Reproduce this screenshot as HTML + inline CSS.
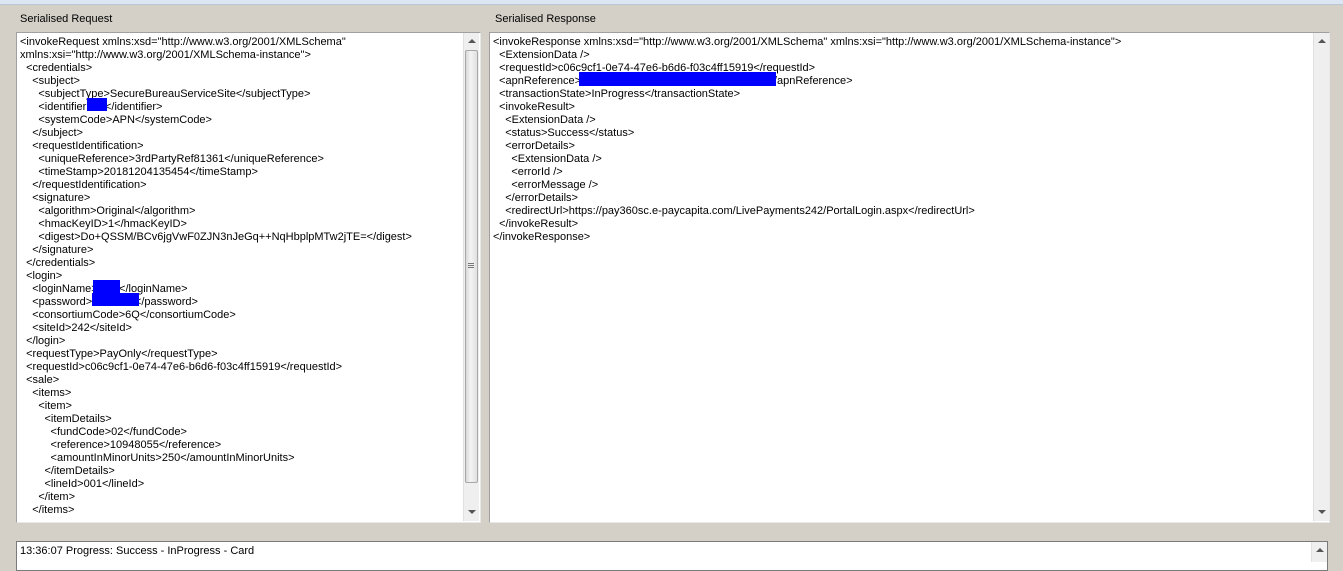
<!DOCTYPE html>
<html><head><meta charset="utf-8"><style>
*{margin:0;padding:0;box-sizing:border-box}
body{width:1343px;height:560px;background:#d4d0c8;position:relative;overflow:hidden;font-family:"Liberation Sans",Tahoma,sans-serif;font-size:11px;color:#000}
.top{position:absolute;left:0;top:0;width:1343px;height:5px;background:#dce7f3;border-bottom:1px solid #b9c6d6}
.lbl{position:absolute;top:13px;font-size:11px}
.box{position:absolute;background:#fff;border:1px solid #a0a0a0;border-right-color:#e8e8e8;border-bottom-color:#e8e8e8}
.txt{position:absolute;white-space:pre;line-height:13px;letter-spacing:0}
.sb{position:absolute;background:#efefef;border-left:1px solid #e0e0e0}
.thumb{position:absolute;left:1px;right:1px;background:linear-gradient(90deg,#d8d8d8,#f4f4f4 40%,#e0e0e0);border:1px solid #a8a8a8;border-radius:2px}
.up,.dn{position:absolute;left:4px;width:0;height:0;border-left:4px solid transparent;border-right:4px solid transparent}
.up{border-bottom:4px solid #555}
.dn{border-top:4px solid #555}
.red{position:absolute;background:#0000ff}
</style></head><body>
<div class="top"></div>
<div class="lbl" style="left:20px">Serialised Request</div>
<div class="lbl" style="left:495px">Serialised Response</div>

<div class="box" style="left:16px;top:32px;width:465px;height:491px"></div>
<div class="sb" style="left:463px;top:33px;width:16px;height:488px">
 <div class="up" style="top:6px"></div>
 <div class="thumb" style="top:17px;height:433px"></div>
 <div style="position:absolute;left:4px;top:230px;width:6px;height:5px;border-top:1px solid #777;border-bottom:1px solid #777"><div style="margin-top:1px;height:1px;background:#777"></div></div>
 <div class="dn" style="top:477px"></div>
</div>
<div class="txt" style="left:20px;top:36px">&lt;invokeRequest xmlns:xsd="http://www.w3.org/2001/XMLSchema"
xmlns:xsi="http://www.w3.org/2001/XMLSchema-instance"&gt;
  &lt;credentials&gt;
    &lt;subject&gt;
      &lt;subjectType&gt;SecureBureauServiceSite&lt;/subjectType&gt;
      &lt;identifier&gt;    &lt;/identifier&gt;
      &lt;systemCode&gt;APN&lt;/systemCode&gt;
    &lt;/subject&gt;
    &lt;requestIdentification&gt;
      &lt;uniqueReference&gt;3rdPartyRef81361&lt;/uniqueReference&gt;
      &lt;timeStamp&gt;20181204135454&lt;/timeStamp&gt;
    &lt;/requestIdentification&gt;
    &lt;signature&gt;
      &lt;algorithm&gt;Original&lt;/algorithm&gt;
      &lt;hmacKeyID&gt;1&lt;/hmacKeyID&gt;
      &lt;digest&gt;Do+QSSM/BCv6jgVwF0ZJN3nJeGq++NqHbplpMTw2jTE=&lt;/digest&gt;
    &lt;/signature&gt;
  &lt;/credentials&gt;
  &lt;login&gt;
    &lt;loginName&gt;       &lt;/loginName&gt;
    &lt;password&gt;              &lt;/password&gt;
    &lt;consortiumCode&gt;6Q&lt;/consortiumCode&gt;
    &lt;siteId&gt;242&lt;/siteId&gt;
  &lt;/login&gt;
  &lt;requestType&gt;PayOnly&lt;/requestType&gt;
  &lt;requestId&gt;c06c9cf1-0e74-47e6-b6d6-f03c4ff15919&lt;/requestId&gt;
  &lt;sale&gt;
    &lt;items&gt;
      &lt;item&gt;
        &lt;itemDetails&gt;
          &lt;fundCode&gt;02&lt;/fundCode&gt;
          &lt;reference&gt;10948055&lt;/reference&gt;
          &lt;amountInMinorUnits&gt;250&lt;/amountInMinorUnits&gt;
        &lt;/itemDetails&gt;
        &lt;lineId&gt;001&lt;/lineId&gt;
      &lt;/item&gt;
    &lt;/items&gt;</div>
<div class="red" style="left:87px;top:98px;width:20px;height:13px"></div>
<div class="red" style="left:93px;top:280px;width:27px;height:14px"></div>
<div class="red" style="left:92px;top:293px;width:47px;height:13px"></div>

<div class="box" style="left:489px;top:32px;width:841px;height:491px"></div>
<div class="sb" style="left:1313px;top:33px;width:16px;height:488px">
 <div class="up" style="top:6px"></div>
 <div class="dn" style="top:477px"></div>
</div>
<div class="txt" style="left:493px;top:36px">&lt;invokeResponse xmlns:xsd="http://www.w3.org/2001/XMLSchema" xmlns:xsi="http://www.w3.org/2001/XMLSchema-instance"&gt;
  &lt;ExtensionData /&gt;
  &lt;requestId&gt;c06c9cf1-0e74-47e6-b6d6-f03c4ff15919&lt;/requestId&gt;
  &lt;apnReference&gt;                                                             &lt;/apnReference&gt;
  &lt;transactionState&gt;InProgress&lt;/transactionState&gt;
  &lt;invokeResult&gt;
    &lt;ExtensionData /&gt;
    &lt;status&gt;Success&lt;/status&gt;
    &lt;errorDetails&gt;
      &lt;ExtensionData /&gt;
      &lt;errorId /&gt;
      &lt;errorMessage /&gt;
    &lt;/errorDetails&gt;
    &lt;redirectUrl&gt;https://pay360sc.e-paycapita.com/LivePayments242/PortalLogin.aspx&lt;/redirectUrl&gt;
  &lt;/invokeResult&gt;
&lt;/invokeResponse&gt;</div>
<div class="red" style="left:579px;top:72px;width:197px;height:14px"></div>

<div class="box" style="left:16px;top:541px;width:1312px;height:30px;border-color:#7a7a7a"></div>
<div class="sb" style="left:1311px;top:542px;width:16px;height:20px"><div class="up" style="top:6px"></div></div>
<div class="txt" style="left:20px;top:545px">13:36:07 Progress: Success - InProgress - Card</div>
</body></html>
